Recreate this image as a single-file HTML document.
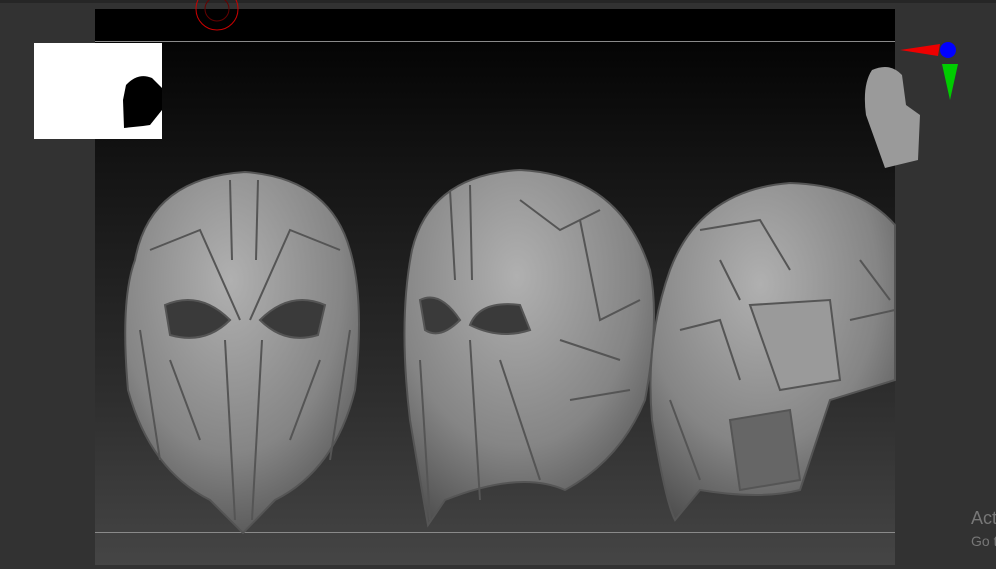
<!DOCTYPE html><html><head><style>
html,body{margin:0;padding:0;width:996px;height:569px;overflow:hidden;background:#323232;font-family:"Liberation Sans",sans-serif}
</style></head><body>
<svg width="996" height="569" style="position:absolute;left:0;top:0">
<defs>
<linearGradient id="vp" x1="0" y1="0" x2="0" y2="1">
<stop offset="0" stop-color="#000"/><stop offset="0.3" stop-color="#151515"/><stop offset="0.7" stop-color="#2e2e2e"/><stop offset="1" stop-color="#454545"/></linearGradient>
<radialGradient id="hm" cx="0.45" cy="0.3" r="0.8">
<stop offset="0" stop-color="#b0b0b0"/><stop offset="0.6" stop-color="#858585"/><stop offset="1" stop-color="#4a4a4a"/></radialGradient>
</defs>
<rect x="0" y="0" width="996" height="3" fill="#262626"/>
<rect x="95" y="9" width="800" height="556" fill="url(#vp)"/>
<rect x="95" y="9" width="800" height="32" fill="#000"/>
<line x1="95" y1="41.5" x2="895" y2="41.5" stroke="#8a8a8a"/>
<line x1="95" y1="532.5" x2="895" y2="532.5" stroke="#8a8a8a"/>
<circle cx="217" cy="9" r="21" fill="none" stroke="#c00" stroke-width="1"/>
<circle cx="217" cy="9" r="12" fill="none" stroke="#600" stroke-width="1"/>
<rect x="34" y="43" width="128" height="96" fill="#fff"/>
<path d="M126 85 Q138 72 152 78 L162 88 L162 110 L150 125 L143 126 L124 128 L123 100 Z" fill="#000"/>
<g stroke="#555" stroke-width="2" fill="none">
<!-- helmet 1 -->
<path d="M245 172 Q150 178 135 260 Q120 300 128 390 Q150 470 210 500 L243 533 L275 500 Q335 470 355 390 Q365 300 350 250 Q330 178 245 172Z" fill="url(#hm)"/>
<path d="M230 180 L232 260 M258 180 L256 260 M150 250 L200 230 L240 320 M340 250 L290 230 L250 320 M140 330 L160 460 M350 330 L330 460 M225 340 L235 520 M262 340 L252 520 M170 360 L200 440 M320 360 L290 440"/>
<path d="M165 305 Q200 290 230 320 Q205 345 170 335Z M325 305 Q290 290 260 320 Q285 345 318 335Z" fill="#3a3a3a"/>
<!-- helmet 2 -->
<path d="M520 170 Q430 175 412 250 Q398 320 410 420 Q420 480 428 525 L445 500 Q520 470 565 490 Q620 460 645 400 Q660 320 650 270 Q620 175 520 170Z" fill="url(#hm)"/>
<path d="M450 190 L455 280 M470 185 L472 280 M520 200 L560 230 L600 210 M580 220 L600 320 L640 300 M420 360 L430 520 M470 340 L480 500 M560 340 L620 360 M570 400 L630 390 M500 360 L540 480"/>
<path d="M420 300 Q440 290 460 320 Q440 340 425 330Z M520 305 Q480 300 470 325 Q500 340 530 330Z" fill="#3a3a3a"/>
<!-- helmet 3 -->
<path d="M790 183 Q700 190 670 270 Q645 340 652 420 Q665 500 675 520 L700 490 Q760 500 800 490 L830 400 L895 380 L895 225 Q860 185 790 183Z" fill="url(#hm)"/>
<path d="M700 230 L760 220 L790 270 M720 260 L740 300 M680 330 L720 320 L740 380 M670 400 L700 480 M860 260 L890 300 M850 320 L895 310"/>
<path d="M750 305 L830 300 L840 380 L780 390 Z" fill="#9a9a9a"/>
<path d="M730 420 L790 410 L800 480 L740 490Z" fill="#666"/>
</g>
<!-- small head -->
<path d="M872 70 Q890 62 902 75 L906 105 L920 115 L918 160 L885 168 L875 140 L866 115 Q862 85 872 70Z" fill="#9a9a9a"/>
<!-- gizmo -->
<path d="M900 50 L940 44 L938 56Z" fill="#e00"/>
<circle cx="948" cy="50" r="8" fill="#00f"/>
<path d="M942 64 L958 64 L950 100Z" fill="#0c0"/>
</svg>
<div style="position:absolute;left:971px;top:508px;color:#777;font-size:18px;white-space:nowrap">Act</div>
<div style="position:absolute;left:971px;top:533px;color:#777;font-size:14px;white-space:nowrap">Go t</div>
</body></html>
